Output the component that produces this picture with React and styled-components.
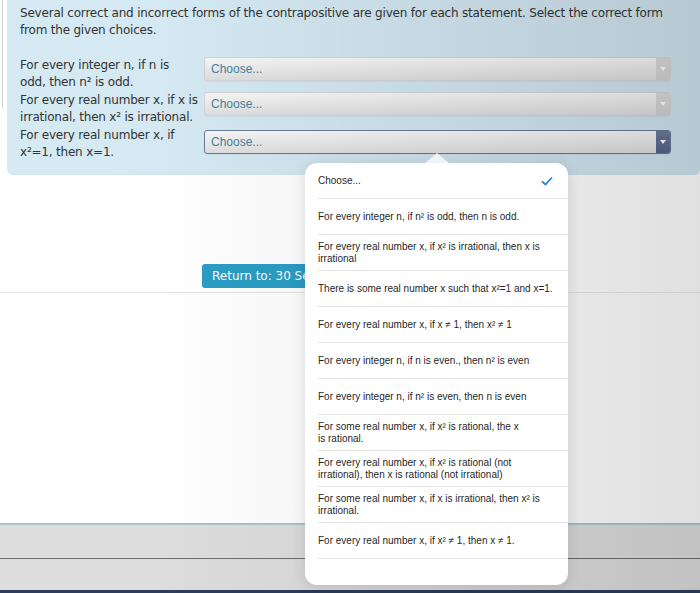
import styled, { createGlobalStyle } from 'styled-components'

const GlobalStyle = createGlobalStyle`
  html, body {
    margin: 0;
    padding: 0;
    background: #ffffff;
  }
  #root {
    width: 700px;
    height: 593px;
    position: relative;
    overflow: hidden;
  }
`

const Page = styled.div`
  position: relative;
  width: 700px;
  height: 593px;
  display: flex;
  flex-direction: column;
  font-family: 'DejaVu Sans', Verdana, sans-serif;
  color: #333333;
`

const TopRow = styled.div`
  display: flex;
  align-items: flex-start;
`

const SideRule = styled.div`
  width: 1px;
  height: 108px;
  margin-left: 2px;
  background: #d4d4d4;
`

const Panel = styled.div`
  flex: 1;
  margin-left: 4px;
  padding: 5px 13px 14px 13px;
  background: linear-gradient(to right, #d6eaf4, #d0e5ef);
  border-radius: 0 0 6px 6px;
`

const Intro = styled.p`
  margin: 0 0 18px 0;
  font-size: 12px;
  letter-spacing: -0.2px;
  line-height: 17px;
  white-space: nowrap;
`

const Rows = styled.div`
  display: flex;
  flex-direction: column;
  gap: 1px;
`

const Row = styled.div`
  display: flex;
  align-items: flex-start;
`

const Label = styled.div`
  width: 184px;
  font-size: 12px;
  letter-spacing: -0.2px;
  line-height: 17px;
  white-space: nowrap;
`

const Select = styled.div`
  flex: 0 0 465px;
  height: 22px;
  margin-top: ${({ $offset }) => $offset || 0}px;
  display: flex;
  align-items: stretch;
  border: 1px solid ${({ $open }) => ($open ? '#6a7b98' : '#d3d6d8')};
  border-radius: 3px;
  background: linear-gradient(#f7f7f7, #dedede);
  overflow: hidden;
  box-shadow: 0 1px 1px rgba(0, 0, 0, 0.04);
`

const SelectText = styled.span`
  flex: 1;
  padding-left: 6px;
  font-family: 'Liberation Sans', Arial, sans-serif;
  font-size: 12px;
  line-height: 22px;
  color: #4582a0;
`

const Cap = styled.span`
  width: 14px;
  display: flex;
  align-items: center;
  justify-content: center;
  background: ${({ $open }) =>
    $open ? 'linear-gradient(#6a7a9a, #55658a)' : 'linear-gradient(#dadada, #d2d2d2)'};
  &::after {
    content: '';
    border-left: 3px solid transparent;
    border-right: 3px solid transparent;
    border-top: 4px solid #ffffff;
  }
`

const ReturnButton = styled.button`
  align-self: flex-start;
  margin: 89px 0 0 202px;
  height: 24px;
  padding: 0 24px 0 10px;
  border: none;
  border-radius: 3px;
  background: #2b9dc4;
  color: #ffffff;
  font-family: 'DejaVu Sans', Verdana, sans-serif;
  font-size: 12px;
  white-space: nowrap;
`

const Divider = styled.div`
  margin-top: 4px;
  height: 1px;
  background: #e6e6e6;
`

const Spacer = styled.div`
  flex: 1;
`

const Footer = styled.div`
  display: flex;
  flex-direction: column;
  border-top: 2px solid #a9c5d0;
`

const FooterBand = styled.div`
  height: ${({ $h }) => $h}px;
  background: #dddddd;
  border-bottom: ${({ $w }) => $w}px solid ${({ $line }) => $line};
`

const Vignette = styled.div`
  position: absolute;
  inset: 0;
  pointer-events: none;
  background: linear-gradient(to right, rgba(0, 0, 0, 0) 22%, rgba(0, 0, 0, 0.12) 100%);
`

const Popup = styled.div`
  position: absolute;
  left: 305px;
  top: 163px;
  width: 263px;
  height: 422px;
  background: #ffffff;
  border-radius: 12px;
  box-shadow: 0 2px 14px rgba(0, 0, 0, 0.12);
  font-family: 'Liberation Sans', Arial, sans-serif;
  color: #1f1f1f;
  &::before {
    content: '';
    position: absolute;
    top: -10px;
    left: 120px;
    border-left: 12px solid transparent;
    border-right: 12px solid transparent;
    border-bottom: 10px solid #eef3f6;
  }
`

const OptionList = styled.ul`
  list-style: none;
  margin: 0;
  padding: 0 0 0 13px;
`

const Option = styled.li`
  height: 35px;
  display: flex;
  align-items: center;
  justify-content: space-between;
  border-bottom: 1px solid #e6e6e6;
  font-size: 10px;
  line-height: 12px;
  white-space: nowrap;
`

const Check = styled.svg`
  width: 12px;
  height: 10px;
  margin-right: 15px;
`

const statements = [
  { lines: ['For every integer n,  if n is', 'odd, then n\u00b2 is odd.'] },
  { lines: ['For every real number x, if x is', 'irrational, then x\u00b2  is irrational.'] },
  { lines: ['For every real number x,  if', 'x\u00b2=1, then x=1.'], open: true, offset: 3 },
]

const options = [
  ['For every integer n, if n\u00b2 is odd, then n is odd.'],
  ['For every real number x, if x\u00b2 is irrational, then x is', 'irrational'],
  ['There is some real number x such that x\u00b2=1 and x=1.'],
  ['For every real number x, if x \u2260 1, then x\u00b2 \u2260 1'],
  ['For every integer n, if n is even., then n\u00b2 is even'],
  ['For every integer n, if n\u00b2 is even, then n is even'],
  ['For some real number x, if x\u00b2 is rational, the x', 'is rational.'],
  ['For every real number x, if x\u00b2 is rational (not', 'irrational), then x is rational (not irrational)'],
  ['For some real number x, if x is irrational, then x\u00b2 is', 'irrational.'],
  ['For every real number x, if x\u00b2 \u2260 1, then x \u2260 1.'],
]

const App = () => {
  return (
    <>
      <GlobalStyle />
      <Page>
        <TopRow>
          <SideRule />
          <Panel>
            <Intro>
              Several correct and incorrect forms of the contrapositive are given for each statement. Select the correct form
              <br />
              from the given choices.
            </Intro>
            <Rows>
              {statements.map((s, index) => (
                <Row key={`statement-${index}`}>
                  <Label>
                    {s.lines[0]}
                    <br />
                    {s.lines[1]}
                  </Label>
                  <Select $open={s.open} $offset={s.offset}>
                    <SelectText>Choose...</SelectText>
                    <Cap $open={s.open} />
                  </Select>
                </Row>
              ))}
            </Rows>
          </Panel>
        </TopRow>
        <ReturnButton>Return to: 30 Se</ReturnButton>
        <Divider />
        <Spacer />
        <Footer>
          <FooterBand $h={33} $w={1} $line="#6e6e6e" />
          <FooterBand $h={31} $w={3} $line="#2c3d5c" />
        </Footer>
        <Vignette />
        <Popup>
          <OptionList>
            <Option>
              <span>Choose...</span>
              <Check viewBox="0 0 12 10">
                <polyline points="1,5.5 4.5,8.5 11,1.5" fill="none" stroke="#2f7fd8" strokeWidth="1.8" />
              </Check>
            </Option>
            {options.map((lines, index) => (
              <Option key={`option-${index}`}>
                <span>
                  {lines[0]}
                  {lines[1] && <br />}
                  {lines[1]}
                </span>
              </Option>
            ))}
          </OptionList>
        </Popup>
      </Page>
    </>
  )
}

export default App
